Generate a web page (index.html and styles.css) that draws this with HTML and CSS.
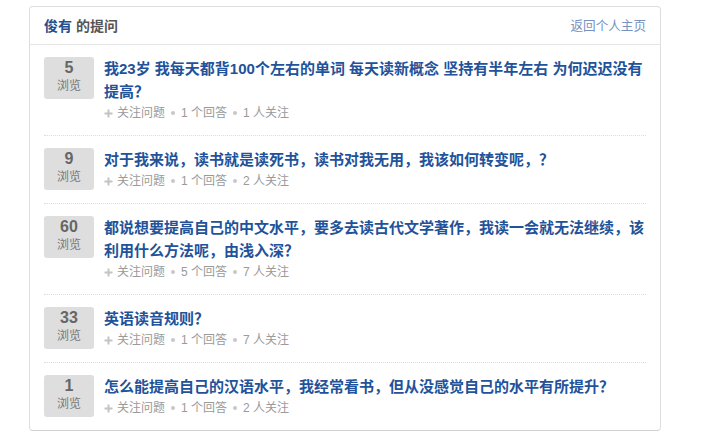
FILE: index.html
```html
<!DOCTYPE html>
<html lang="zh-CN">
<head>
<meta charset="utf-8">
<title>俊有 的提问</title>
<link rel="stylesheet" href="styles.css">
</head>
<body>
<div class="page">
  <div class="card">
    <div class="card-head">
      <h2 class="head-title"><span class="user">俊有</span> 的提问</h2>
      <a class="back" href="#">返回个人主页</a>
    </div>
    <ul class="qlist">
      <li class="q">
        <div class="views"><span class="num">5</span><span class="lbl">浏览</span></div>
        <div class="q-body">
          <a class="q-title" href="#">我23岁 我每天都背100个左右的单词 每天读新概念 坚持有半年左右 为何迟迟没有提高？</a>
          <div class="meta"><span class="plus"><svg width="9" height="9" viewBox="0 0 9 9"><path d="M4.5 0.5v8M0.5 4.5h8" stroke="#c4c4c4" stroke-width="2"/></svg></span>关注问题<i class="dot"></i>1 个回答<i class="dot"></i>1 人关注</div>
        </div>
      </li>
      <li class="q">
        <div class="views"><span class="num">9</span><span class="lbl">浏览</span></div>
        <div class="q-body">
          <a class="q-title" href="#">对于我来说，读书就是读死书，读书对我无用，我该如何转变呢，？</a>
          <div class="meta"><span class="plus"><svg width="9" height="9" viewBox="0 0 9 9"><path d="M4.5 0.5v8M0.5 4.5h8" stroke="#c4c4c4" stroke-width="2"/></svg></span>关注问题<i class="dot"></i>1 个回答<i class="dot"></i>2 人关注</div>
        </div>
      </li>
      <li class="q">
        <div class="views"><span class="num">60</span><span class="lbl">浏览</span></div>
        <div class="q-body">
          <a class="q-title" href="#">都说想要提高自己的中文水平，要多去读古代文学著作，我读一会就无法继续，该利用什么方法呢，由浅入深？</a>
          <div class="meta"><span class="plus"><svg width="9" height="9" viewBox="0 0 9 9"><path d="M4.5 0.5v8M0.5 4.5h8" stroke="#c4c4c4" stroke-width="2"/></svg></span>关注问题<i class="dot"></i>5 个回答<i class="dot"></i>7 人关注</div>
        </div>
      </li>
      <li class="q">
        <div class="views"><span class="num">33</span><span class="lbl">浏览</span></div>
        <div class="q-body">
          <a class="q-title" href="#">英语读音规则？</a>
          <div class="meta"><span class="plus"><svg width="9" height="9" viewBox="0 0 9 9"><path d="M4.5 0.5v8M0.5 4.5h8" stroke="#c4c4c4" stroke-width="2"/></svg></span>关注问题<i class="dot"></i>1 个回答<i class="dot"></i>7 人关注</div>
        </div>
      </li>
      <li class="q">
        <div class="views"><span class="num">1</span><span class="lbl">浏览</span></div>
        <div class="q-body">
          <a class="q-title" href="#">怎么能提高自己的汉语水平，我经常看书，但从没感觉自己的水平有所提升？</a>
          <div class="meta"><span class="plus"><svg width="9" height="9" viewBox="0 0 9 9"><path d="M4.5 0.5v8M0.5 4.5h8" stroke="#c4c4c4" stroke-width="2"/></svg></span>关注问题<i class="dot"></i>1 个回答<i class="dot"></i>2 人关注</div>
        </div>
      </li>
    </ul>
  </div>
</div>
</body>
</html>
```

FILE: styles.css
```css
html, body {
  margin: 0;
  padding: 0;
  background: #fff;
}
body {
  font-family: "Liberation Sans", "Noto Sans CJK SC", sans-serif;
  color: #333;
}
.page {
  padding: 6px 0 0 29px;
}
.card {
  width: 632px;
  box-sizing: border-box;
  border: 1px solid #dedede;
  border-bottom-color: #d0d0d0;
  border-radius: 4px;
  background: #fff;
}
.card-head {
  height: 37px;
  display: flex;
  align-items: center;
  justify-content: space-between;
  padding: 0 14px 0 14px;
  border-bottom: 1px solid #e6e6e6;
}
.head-title {
  margin: 0;
  font-size: 14px;
  font-weight: bold;
  color: #555;
  line-height: 20px;
}
.head-title .user {
  color: #22508f;
}
.back {
  font-size: 12.6px;
  color: #7592c2;
  text-decoration: none;
  line-height: 20px;
}
.qlist {
  list-style: none;
  margin: 0 14px;
  padding: 0;
}
.q {
  display: flex;
  align-items: flex-start;
  gap: 10px;
  padding: 12px 0;
  border-bottom: 1px dotted #dcdcdc;
}
.q:last-child {
  border-bottom: none;
}
.views {
  flex: 0 0 50px;
  height: 42px;
  box-sizing: border-box;
  padding-top: 2px;
  background: #dedede;
  border-radius: 3px;
  display: flex;
  flex-direction: column;
  align-items: center;
}
.views .num {
  font-size: 16px;
  font-weight: bold;
  color: #666;
  line-height: 18px;
}
.views .lbl {
  font-size: 12px;
  color: #777;
  line-height: 18px;
}
.q-body {
  flex: 1;
  min-width: 0;
}
.q-title {
  display: block;
  font-size: 15px;
  font-weight: bold;
  line-height: 23px;
  color: #22529a;
  text-decoration: none;
}
.meta {
  font-size: 12px;
  line-height: 20px;
  color: #9a9a9a;
  display: flex;
  align-items: center;
}
.plus {
  display: inline-flex;
  margin-right: 4px;
}
.dot {
  display: inline-block;
  width: 4px;
  height: 4px;
  border-radius: 50%;
  background: #c8c8c8;
  margin: 0 6px 0 6px;
}
```
